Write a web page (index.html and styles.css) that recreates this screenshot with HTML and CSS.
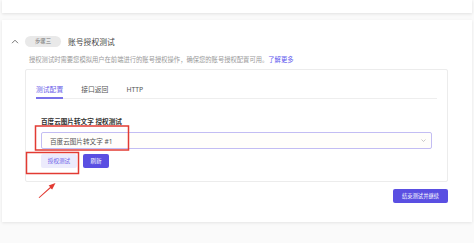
FILE: index.html
```html
<!DOCTYPE html>
<html lang="zh-CN">
<head>
    <meta charset="UTF-8">
    <title>账号授权测试</title>
    <link rel="stylesheet" href="styles.css">
</head>
<body>
    <div class="page">
        <div class="topbar"></div>

        <section class="step">
            <div class="step-head">
                <svg class="fold" width="8" height="5" viewBox="0 0 8 5">
                    <path d="M1 4.2 L4 1.2 L7 4.2" fill="none" stroke="#777" stroke-width="1"/>
                </svg>
                <span class="badge">步骤三</span>
                <span class="step-title">账号授权测试</span>
            </div>
            <p class="desc">授权测试时需要您模拟用户在前端进行的账号授权操作，确保您的账号授权配置可用。<a href="#">了解更多</a></p>

            <div class="panel">
                <div class="tabs">
                    <span class="tab active">测试配置</span>
                    <span class="tab">接口返回</span>
                    <span class="tab">HTTP</span>
                </div>
                <div class="tab-body">
                    <div class="field-label">百度云图片转文字 授权测试</div>
                    <div class="select">
                        <span>百度云图片转文字 #1</span>
                        <svg width="5" height="3" viewBox="0 0 5 3">
                            <path d="M0.5 0.5 L2.5 2.5 L4.5 0.5" fill="none" stroke="#bbb" stroke-width="0.8"/>
                        </svg>
                    </div>
                    <div class="actions">
                        <button class="btn btn-light">授权测试</button>
                        <button class="btn btn-primary">刷新</button>
                    </div>
                </div>
            </div>

            <div class="footer">
                <button class="btn btn-primary btn-end">结束测试并继续</button>
            </div>
        </section>

        <!-- annotations -->
        <svg class="marks" width="474" height="243" viewBox="0 0 474 243">
            <rect x="35.5" y="126" width="93" height="24" fill="none" stroke="#e23b33" stroke-width="1.5"/>
            <rect x="26.5" y="152.5" width="52" height="21" fill="none" stroke="#e23b33" stroke-width="1.5"/>
            <polygon points="38.6,197.4 39.4,198 50.5,188.2 52.2,189.6 55.5,183 48.6,185.4 50.1,187" fill="#e23b33"/>
        </svg>
    </div>
</body>
</html>
```

FILE: styles.css
```css
body {
    margin: 0;
    background-color: #fafafa;
    font-family: "Noto Sans", "Noto Sans CJK SC", sans-serif;
    color: #333;
}
.page {
    position: relative;
    width: 474px;
    height: 243px;
    overflow: hidden;
}
.topbar {
    margin: 0 2px;
    height: 13px;
    background: #fff;
    box-shadow: 0 1px 3px rgba(0, 0, 0, 0.1);
}
.step {
    margin: 7px 2px 0;
    padding: 15px 0 19px;
    background: #fff;
    box-shadow: 0 1px 3px rgba(0, 0, 0, 0.09);
}
.step-head {
    display: flex;
    align-items: center;
    height: 12px;
    padding-left: 9px;
}
.fold {
    margin-right: 6px;
}
.badge {
    width: 36px;
    height: 11px;
    line-height: 11px;
    border-radius: 6px;
    background: #e9e9e9;
    color: #777;
    font-size: 5.4px;
    text-align: center;
}
.step-title {
    margin-left: 7px;
    font-size: 7.8px;
    color: #444;
}
.desc {
    margin: 8px 0 0 27px;
    font-size: 6.3px;
    line-height: 9px;
    color: #999;
}
.desc a {
    color: #6259ee;
    text-decoration: none;
}
.panel {
    margin: 5px 24px 0 23px;
    padding: 0 10px 13px;
    border: 1px solid #ececec;
    border-radius: 2px;
}
.tabs {
    display: flex;
    gap: 18px;
    border-bottom: 1px solid #eee;
}
.tab {
    padding: 15px 0 3px;
    font-size: 6.8px;
    line-height: 9px;
    color: #555;
    border-bottom: 2px solid transparent;
    margin-bottom: -1px;
}
.tab.active {
    color: #6a61e9;
    border-bottom-color: #7a72ea;
}
.tab-body {
    padding: 18px 5px 0;
}
.field-label {
    font-size: 6.6px;
    line-height: 9px;
    font-weight: bold;
    color: #333;
}
.select {
    margin-top: 6px;
    height: 15px;
    display: flex;
    align-items: center;
    justify-content: space-between;
    padding: 0 5px 0 8px;
    border: 1px solid #c3bdf3;
    border-radius: 2px;
    background: #fffefb;
    font-size: 6.6px;
    color: #555;
}
.actions {
    display: flex;
    gap: 6px;
    margin-top: 5px;
}
.btn {
    height: 14px;
    padding: 0;
    border: none;
    border-radius: 2px;
    font-family: inherit;
    font-size: 5.6px;
}
.btn-light {
    width: 36px;
    background: #ecebfc;
    color: #6a61e9;
}
.btn-primary {
    width: 26px;
    background: #5a4fe2;
    color: #fff;
}
.footer {
    display: flex;
    justify-content: flex-end;
    margin: 7px 24px 0 0;
}
.btn-end {
    width: 55px;
    font-size: 5.3px;
}
.marks {
    position: absolute;
    top: 0;
    left: 0;
}
```
